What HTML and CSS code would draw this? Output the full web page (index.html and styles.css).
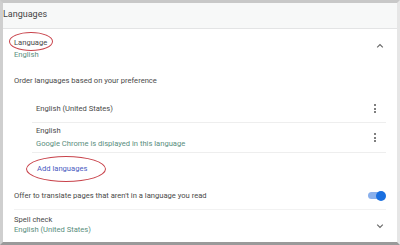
FILE: index.html
```html
<!DOCTYPE html>
<html lang="en">
<head>
  <meta charset="UTF-8">
  <title>Languages</title>
  <link rel="stylesheet" href="styles.css">
</head>
<body>
  <div class="frame">
    <div class="header">Languages</div>

    <div class="card">
      <div class="row lang-row">
        <div class="text">
          <div class="title circled">Language</div>
          <div class="sub">English</div>
        </div>
        <svg class="chev up" width="10" height="10" viewBox="0 0 10 10"><path d="M2.2 6.3 L5 3.5 L7.8 6.3" fill="none" stroke="#666" stroke-width="1.1"/></svg>
      </div>

      <div class="order">Order languages based on your preference</div>

      <div class="lang-list">
        <div class="lang-item first">
          <div class="text">
            <div class="title">English (United States)</div>
          </div>
          <span class="kebab"><i></i><i></i><i></i></span>
        </div>
        <div class="lang-item second">
          <div class="text">
            <div class="title">English</div>
            <div class="sub">Google Chrome is displayed in this language</div>
          </div>
          <span class="kebab"><i></i><i></i><i></i></span>
        </div>
        <div class="add"><span class="circled-add">Add languages</span></div>
      </div>

      <div class="row translate-row">
        <div class="title">Offer to translate pages that aren't in a language you read</div>
        <span class="toggle"><span class="knob"></span></span>
      </div>

      <div class="row spell-row">
        <div class="text">
          <div class="title">Spell check</div>
          <div class="sub">English (United States)</div>
        </div>
        <svg class="chev" width="10" height="10" viewBox="0 0 10 10"><path d="M2.2 3.7 L5 6.5 L7.8 3.7" fill="none" stroke="#666" stroke-width="1.1"/></svg>
      </div>
    </div>
  </div>
</body>
</html>
```

FILE: styles.css
```css
/* Base */
body {
  margin: 0;
  font-family: Roboto, "Liberation Sans", sans-serif;
  color: #444;
  background: #fff;
}

.frame {
  width: 400px;
  height: 245px;
  box-sizing: border-box;
  border-top: 3px solid #c8c8c8;
  border-left: 3px solid #cfcfcf;
  border-right: 3px solid #e6e6e6;
  border-bottom: 3px solid #9a9a9a;
  overflow: hidden;
}

/* Header */
.header {
  height: 25px;
  line-height: 23px;
  font-size: 9px;
  color: #444;
  background: #f7f8f8;
  border-bottom: 1px solid #e3e4e5;
}

/* Card */
.card {
  padding: 0 11px;
  font-size: 7.6px;
  line-height: 9px;
}

.row {
  display: flex;
  align-items: center;
  justify-content: space-between;
}

.title {
  color: #4a4a4a;
}

.sub {
  color: #5a8e7e;
  margin-top: 2px;
}

.chev {
  margin-right: 1px;
}

.lang-row {
  height: 30px;
  align-items: flex-start;
  padding-top: 9px;
  box-sizing: border-box;
}

.lang-row .sub {
  margin-top: 3px;
}

.chev.up {
  margin-top: 3px;
}

.circled {
  position: relative;
  display: inline-block;
}

.circled::after {
  content: "";
  position: absolute;
  left: -5px;
  top: -6px;
  width: 42px;
  height: 17px;
  border: 1.3px solid #c8424a;
  border-radius: 50%;
}

.order {
  margin-top: 17px;
  color: #4a4a4a;
}

/* Language list */
.lang-list {
  margin: 10px 0 0 18px;
}

.lang-item {
  display: flex;
  justify-content: space-between;
  padding-left: 4px;
  border-bottom: 1px solid #eeeeee;
}

.lang-item.first {
  height: 27px;
  align-items: center;
}

.lang-item.second {
  height: 29px;
  align-items: center;
}

.lang-item.second .text {
  margin-top: -1px;
}

.lang-item.second .sub {
  margin-top: 4px;
}

.kebab {
  display: flex;
  flex-direction: column;
  gap: 1.2px;
  margin-right: 10px;
}

.kebab i {
  display: block;
  width: 2px;
  height: 2px;
  background: #555;
  border-radius: 50%;
}

.add {
  height: 28px;
  padding-top: 1px;
  display: flex;
  align-items: center;
  padding-left: 5px;
}

.circled-add {
  position: relative;
  color: #4a5bbf;
}

.circled-add::after {
  content: "";
  position: absolute;
  left: -11px;
  top: -8px;
  width: 78px;
  height: 24px;
  border: 1.3px solid #c8424a;
  border-radius: 50%;
}

/* Translate toggle */
.translate-row {
  height: 27px;
  border-bottom: 1px solid #f2f2f2;
}

.toggle {
  position: relative;
  width: 17px;
  height: 7px;
  background: #8ab0ec;
  border-radius: 4px;
  margin-right: 1px;
}

.knob {
  position: absolute;
  right: -1px;
  top: -1.5px;
  width: 10px;
  height: 10px;
  border-radius: 50%;
  background: #1a6fe0;
}

.spell-row {
  height: 29px;
}

.spell-row .chev {
  margin-top: 2px;
}

.spell-row .sub {
  margin-top: 1px;
}
```
